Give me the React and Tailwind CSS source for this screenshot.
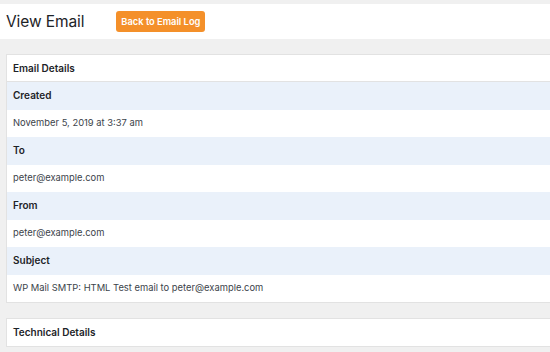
const ROWS = [
  { label: 'Created', value: 'November 5, 2019 at 3:37 am' },
  { label: 'To', value: 'peter@example.com' },
  { label: 'From', value: 'peter@example.com' },
  { label: 'Subject', value: 'WP Mail SMTP: HTML Test email to peter@example.com' },
]

export default function App() {
  return (
    <div
      className="w-[550px] h-[352px] overflow-hidden bg-[#f0f0f0] pt-[4px] text-[#2c3338]"
      style={{ fontFamily: 'Inter, "Liberation Sans", sans-serif' }}
    >
      <div className="flex h-[35px] items-center bg-white pl-[6px]">
        <h1 className="text-[15.5px] font-normal text-[#1d2327] tracking-[-0.1px]">View Email</h1>
        <button
          type="button"
          className="ml-[32px] h-[21px] rounded-[3px] bg-[#f4902a] px-[5px] text-[9.3px] font-semibold text-white"
        >
          Back to Email Log
        </button>
      </div>

      <div className="ml-[6px] mt-[15px] border border-r-0 border-[#e2e2e2] bg-white">
        <div className="flex h-[27px] items-center border-b border-[#e2e2e2] px-[6px] text-[10px] font-semibold text-[#1d2327]">
          Email Details
        </div>
        {ROWS.map((row) => (
          <div key={row.label}>
            <div className="flex h-[27.5px] items-center bg-[#eaf1fa] px-[6px] text-[10px] font-semibold text-[#1d2327]">
              {row.label}
            </div>
            <div className="flex h-[27.5px] items-center px-[6px] text-[9.4px] text-[#3c434a]">
              {row.value}
            </div>
          </div>
        ))}
      </div>

      <div className="ml-[6px] mt-[15px] flex h-[29px] items-center border border-r-0 border-[#e2e2e2] bg-white px-[6px] text-[10px] font-semibold text-[#1d2327]">
        Technical Details
      </div>
    </div>
  )
}
